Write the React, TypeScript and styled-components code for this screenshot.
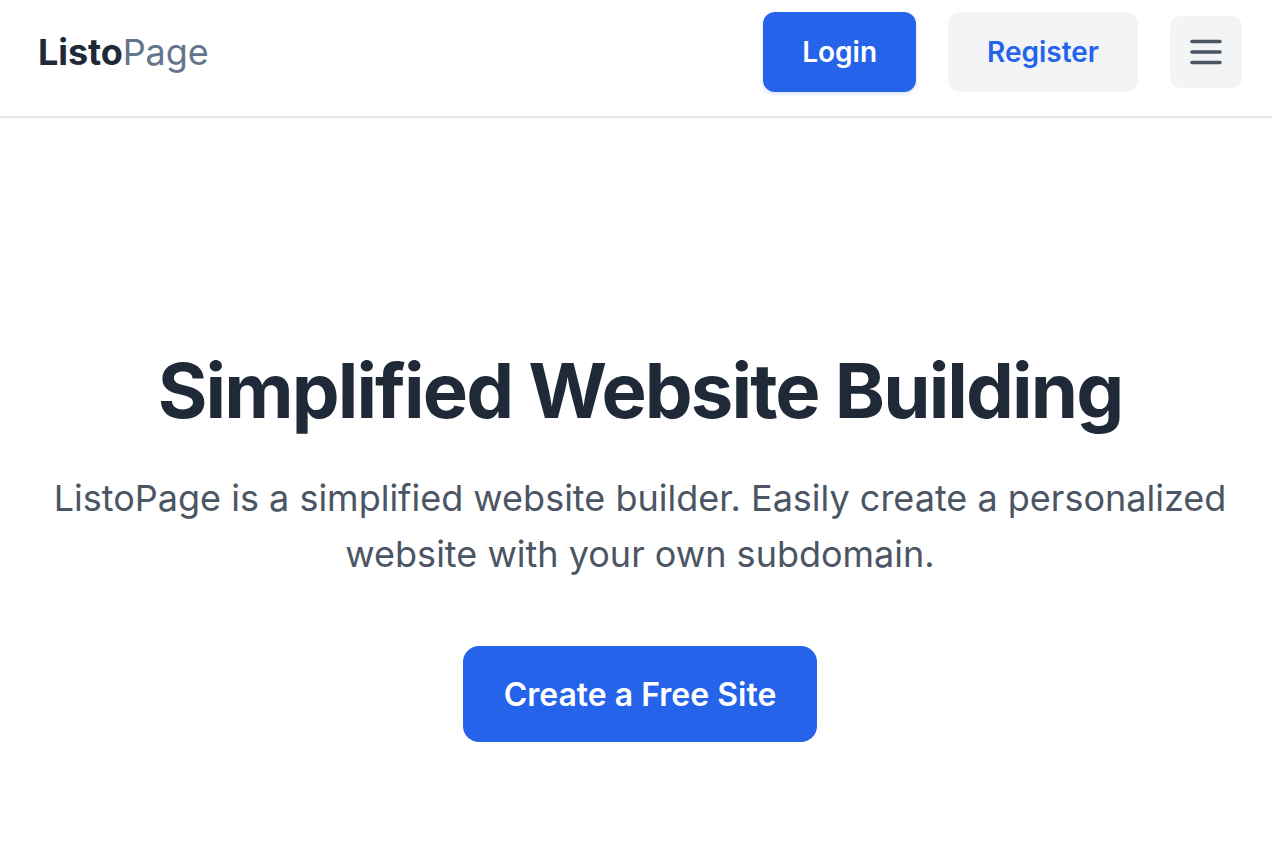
import styled, { createGlobalStyle } from 'styled-components';

// 전역 기본 스타일 (원본 페이지 폭 1280px, 창이 조금 더 좁아 오른쪽이 잘림)
const GlobalStyle = createGlobalStyle`
  html, body {
    margin: 0;
    padding: 0;
    background: #ffffff;
    font-family: Inter, "Noto Sans", "Liberation Sans", sans-serif;
    overflow-x: hidden;
  }
  #root { width: 1280px; }
  * { box-sizing: border-box; }
`;

// --- Header ---
const Header = styled.header`
  display: flex;
  align-items: center;
  justify-content: space-between;
  height: 118px;
  padding: 12px 38px 24px 38px;
  border-bottom: 2px solid #e5e7eb;
`;

const Logo = styled.a`
  font-size: 36px;
  letter-spacing: -0.1px;
  color: #1f2937;
  text-decoration: none;
  font-weight: 700;

  span {
    font-weight: 400;
    color: #64748b;
  }
`;

const Nav = styled.nav`
  display: flex;
  align-items: center;
  gap: 32px;
`;

const NavButton = styled.button<{ $primary?: boolean }>`
  height: 80px;
  padding: 0 39px;
  border: none;
  border-radius: 12px;
  font-family: inherit;
  font-size: 28px;
  font-weight: 600;
  cursor: pointer;
  background: ${({ $primary }) => ($primary ? '#2563eb' : '#f3f4f6')};
  color: ${({ $primary }) => ($primary ? '#ffffff' : '#2563eb')};
  box-shadow: ${({ $primary }) =>
    $primary ? '0 2px 4px rgba(37, 99, 235, 0.18)' : 'none'};
`;

const MenuButton = styled.button`
  display: flex;
  align-items: center;
  justify-content: center;
  width: 72px;
  height: 72px;
  border: none;
  border-radius: 10px;
  background: #f3f4f6;
  cursor: pointer;
`;

// --- Hero ---
const Hero = styled.main`
  display: flex;
  flex-direction: column;
  align-items: center;
  padding: 234px 40px 0;
  text-align: center;
`;

const Title = styled.h1`
  margin: 0 0 42px;
  font-size: 76px;
  line-height: 1;
  font-weight: 700;
  letter-spacing: -0.025em;
  color: #1f2937;
`;

const Description = styled.p`
  margin: 0;
  max-width: 1190px;
  font-size: 36px;
  line-height: 56px;
  color: #4b5563;
`;

const CtaButton = styled.button`
  margin-top: 64px;
  height: 96px;
  padding: 0 41px;
  border: none;
  border-radius: 16px;
  background: #2563eb;
  color: #ffffff;
  font-family: inherit;
  font-size: 32px;
  font-weight: 600;
  cursor: pointer;
`;

function MenuIcon() {
  return (
    <svg width="32" height="32" viewBox="0 0 32 32" fill="none">
      <path
        d="M2 5.5h28M2 16h28M2 26.5h28"
        stroke="#4b5563"
        strokeWidth="3.6"
        strokeLinecap="round"
      />
    </svg>
  );
}

export default function App() {
  return (
    <>
      <GlobalStyle />
      <Header>
        <Logo href="#">
          Listo<span>Page</span>
        </Logo>
        <Nav>
          <NavButton $primary>Login</NavButton>
          <NavButton>Register</NavButton>
          <MenuButton aria-label="menu">
            <MenuIcon />
          </MenuButton>
        </Nav>
      </Header>
      <Hero>
        <Title>Simplified Website Building</Title>
        <Description>
          ListoPage is a simplified website builder. Easily create a personalized
          website with your own subdomain.
        </Description>
        <CtaButton>Create a Free Site</CtaButton>
      </Hero>
    </>
  );
}
